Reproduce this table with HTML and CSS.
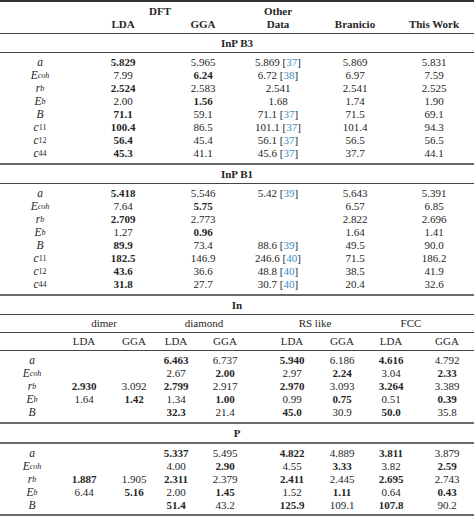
FILE: index.html
```html
<!DOCTYPE html>
<html>
<head>
<meta charset="utf-8">
<link rel="stylesheet" href="styles.css">
</head>
<body>
<div class="tbl">
  <div class="g6 head">
    <div class="c"></div>
    <div class="c span2">DFT</div>
    <div class="c">Other</div>
    <div class="c"></div>
    <div class="c"></div>
    <div class="c"></div>
    <div class="c">LDA</div>
    <div class="c">GGA</div>
    <div class="c">Data</div>
    <div class="c">Branicio</div>
    <div class="c">This Work</div>
  </div>

  <div class="title thin">InP B3</div>
  <div class="g6 data thick">
    <div class="c lab"><i>a</i></div><div class="c b">5.829</div><div class="c">5.965</div><div class="c">5.869&nbsp;[<span class="ref">37</span>]</div><div class="c">5.869</div><div class="c">5.831</div>
    <div class="c lab"><i>E</i><sub><i>coh</i></sub></div><div class="c">7.99</div><div class="c b">6.24</div><div class="c">6.72&nbsp;[<span class="ref">38</span>]</div><div class="c">6.97</div><div class="c">7.59</div>
    <div class="c lab"><i>r</i><sub><i>b</i></sub></div><div class="c b">2.524</div><div class="c">2.583</div><div class="c">2.541</div><div class="c">2.541</div><div class="c">2.525</div>
    <div class="c lab"><i>E</i><sub><i>b</i></sub></div><div class="c">2.00</div><div class="c b">1.56</div><div class="c">1.68</div><div class="c">1.74</div><div class="c">1.90</div>
    <div class="c lab"><i>B</i></div><div class="c b">71.1</div><div class="c">59.1</div><div class="c">71.1&nbsp;[<span class="ref">37</span>]</div><div class="c">71.5</div><div class="c">69.1</div>
    <div class="c lab"><i>c</i><sub>11</sub></div><div class="c b">100.4</div><div class="c">86.5</div><div class="c">101.1&nbsp;[<span class="ref">37</span>]</div><div class="c">101.4</div><div class="c">94.3</div>
    <div class="c lab"><i>c</i><sub>12</sub></div><div class="c b">56.4</div><div class="c">45.4</div><div class="c">56.1&nbsp;[<span class="ref">37</span>]</div><div class="c">56.5</div><div class="c">56.5</div>
    <div class="c lab"><i>c</i><sub>44</sub></div><div class="c b">45.3</div><div class="c">41.1</div><div class="c">45.6&nbsp;[<span class="ref">37</span>]</div><div class="c">37.7</div><div class="c">44.1</div>
  </div>

  <div class="title thin">InP B1</div>
  <div class="g6 data thick">
    <div class="c lab"><i>a</i></div><div class="c b">5.418</div><div class="c">5.546</div><div class="c">5.42&nbsp;[<span class="ref">39</span>]</div><div class="c">5.643</div><div class="c">5.391</div>
    <div class="c lab"><i>E</i><sub><i>coh</i></sub></div><div class="c">7.64</div><div class="c b">5.75</div><div class="c"></div><div class="c">6.57</div><div class="c">6.85</div>
    <div class="c lab"><i>r</i><sub><i>b</i></sub></div><div class="c b">2.709</div><div class="c">2.773</div><div class="c"></div><div class="c">2.822</div><div class="c">2.696</div>
    <div class="c lab"><i>E</i><sub><i>b</i></sub></div><div class="c">1.27</div><div class="c b">0.96</div><div class="c"></div><div class="c">1.64</div><div class="c">1.41</div>
    <div class="c lab"><i>B</i></div><div class="c b">89.9</div><div class="c">73.4</div><div class="c">88.6&nbsp;[<span class="ref">39</span>]</div><div class="c">49.5</div><div class="c">90.0</div>
    <div class="c lab"><i>c</i><sub>11</sub></div><div class="c b">182.5</div><div class="c">146.9</div><div class="c">246.6&nbsp;[<span class="ref">40</span>]</div><div class="c">71.5</div><div class="c">186.2</div>
    <div class="c lab"><i>c</i><sub>12</sub></div><div class="c b">43.6</div><div class="c">36.6</div><div class="c">48.8&nbsp;[<span class="ref">40</span>]</div><div class="c">38.5</div><div class="c">41.9</div>
    <div class="c lab"><i>c</i><sub>44</sub></div><div class="c b">31.8</div><div class="c">27.7</div><div class="c">30.7&nbsp;[<span class="ref">40</span>]</div><div class="c">20.4</div><div class="c">32.6</div>
  </div>

  <div class="title thin">In</div>
  <div class="g5 groups thin">
    <div class="c"></div>
    <div class="c">dimer</div>
    <div class="c">diamond</div>
    <div class="c">RS like</div>
    <div class="c">FCC</div>
  </div>
  <div class="g9 groups thin">
    <div class="c"></div>
    <div class="c">LDA</div><div class="c">GGA</div>
    <div class="c">LDA</div><div class="c">GGA</div>
    <div class="c">LDA</div><div class="c">GGA</div>
    <div class="c">LDA</div><div class="c">GGA</div>
  </div>
  <div class="g9 data thick">
    <div class="c lab"><i>a</i></div><div class="c"></div><div class="c"></div><div class="c b">6.463</div><div class="c">6.737</div><div class="c b">5.940</div><div class="c">6.186</div><div class="c b">4.616</div><div class="c">4.792</div>
    <div class="c lab"><i>E</i><sub><i>coh</i></sub></div><div class="c"></div><div class="c"></div><div class="c">2.67</div><div class="c b">2.00</div><div class="c">2.97</div><div class="c b">2.24</div><div class="c">3.04</div><div class="c b">2.33</div>
    <div class="c lab"><i>r</i><sub><i>b</i></sub></div><div class="c b">2.930</div><div class="c">3.092</div><div class="c b">2.799</div><div class="c">2.917</div><div class="c b">2.970</div><div class="c">3.093</div><div class="c b">3.264</div><div class="c">3.389</div>
    <div class="c lab"><i>E</i><sub><i>b</i></sub></div><div class="c">1.64</div><div class="c b">1.42</div><div class="c">1.34</div><div class="c b">1.00</div><div class="c">0.99</div><div class="c b">0.75</div><div class="c">0.51</div><div class="c b">0.39</div>
    <div class="c lab"><i>B</i></div><div class="c"></div><div class="c"></div><div class="c b">32.3</div><div class="c">21.4</div><div class="c b">45.0</div><div class="c">30.9</div><div class="c b">50.0</div><div class="c">35.8</div>
  </div>

  <div class="title thick">P</div>
  <div class="g9 data thick last">
    <div class="c lab"><i>a</i></div><div class="c"></div><div class="c"></div><div class="c b">5.337</div><div class="c">5.495</div><div class="c b">4.822</div><div class="c">4.889</div><div class="c b">3.811</div><div class="c">3.879</div>
    <div class="c lab"><i>E</i><sub><i>coh</i></sub></div><div class="c"></div><div class="c"></div><div class="c">4.00</div><div class="c b">2.90</div><div class="c">4.55</div><div class="c b">3.33</div><div class="c">3.82</div><div class="c b">2.59</div>
    <div class="c lab"><i>r</i><sub><i>b</i></sub></div><div class="c b">1.887</div><div class="c">1.905</div><div class="c b">2.311</div><div class="c">2.379</div><div class="c b">2.411</div><div class="c">2.445</div><div class="c b">2.695</div><div class="c">2.743</div>
    <div class="c lab"><i>E</i><sub><i>b</i></sub></div><div class="c">6.44</div><div class="c b">5.16</div><div class="c">2.00</div><div class="c b">1.45</div><div class="c">1.52</div><div class="c b">1.11</div><div class="c">0.64</div><div class="c b">0.43</div>
    <div class="c lab"><i>B</i></div><div class="c"></div><div class="c"></div><div class="c b">51.4</div><div class="c">43.2</div><div class="c b">125.9</div><div class="c">109.1</div><div class="c b">107.8</div><div class="c">90.2</div>
  </div>
</div>
</body>
</html>
```

FILE: styles.css
```css
html, body {
  margin: 0;
  padding: 0;
  background: #ffffff;
}
body {
  width: 474px;
  font-family: "Liberation Serif", "Times New Roman", serif;
  font-size: 11px;
  color: #262626;
}
.tbl {
  border-top: 2px solid #333333;
}
.g6 {
  display: grid;
  grid-template-columns: 80px 86px 74px 76px 78px 80px;
  grid-auto-rows: 13px;
}
.g9 {
  display: grid;
  grid-template-columns: 64px 40px 60px 24px 74px 60px 40px 58px 54px;
}
.g5 {
  display: grid;
  grid-template-columns: 64px 80px 120px 102px 90px;
}
.c {
  display: flex;
  justify-content: center;
  align-items: center;
  white-space: nowrap;
  line-height: 13px;
  height: 13px;
}
.span2 { grid-column: span 2; }
.head {
  font-weight: bold;
  padding: 3px 0 2px;
  border-bottom: 1px solid #444444;
}
.title {
  height: 18px;
  line-height: 18px;
  text-align: center;
  font-weight: bold;
}
.thin { border-bottom: 1px solid #444444; }
.thick { border-bottom: 2px solid #6a6a6a; }
.data {
  padding: 3px 0 3px;
  grid-auto-rows: 13px;
}
.data.last { padding-bottom: 2px; }
.groups {
  height: 17px;
  align-items: center;
}
.groups .c { height: 17px; line-height: 17px; }
.b { font-weight: bold; }
.lab { font-size: 11.5px; }
.lab sub {
  font-size: 8px;
  vertical-align: -3px;
  line-height: 0;
}
.ref { color: #3a8cc4; }
```
